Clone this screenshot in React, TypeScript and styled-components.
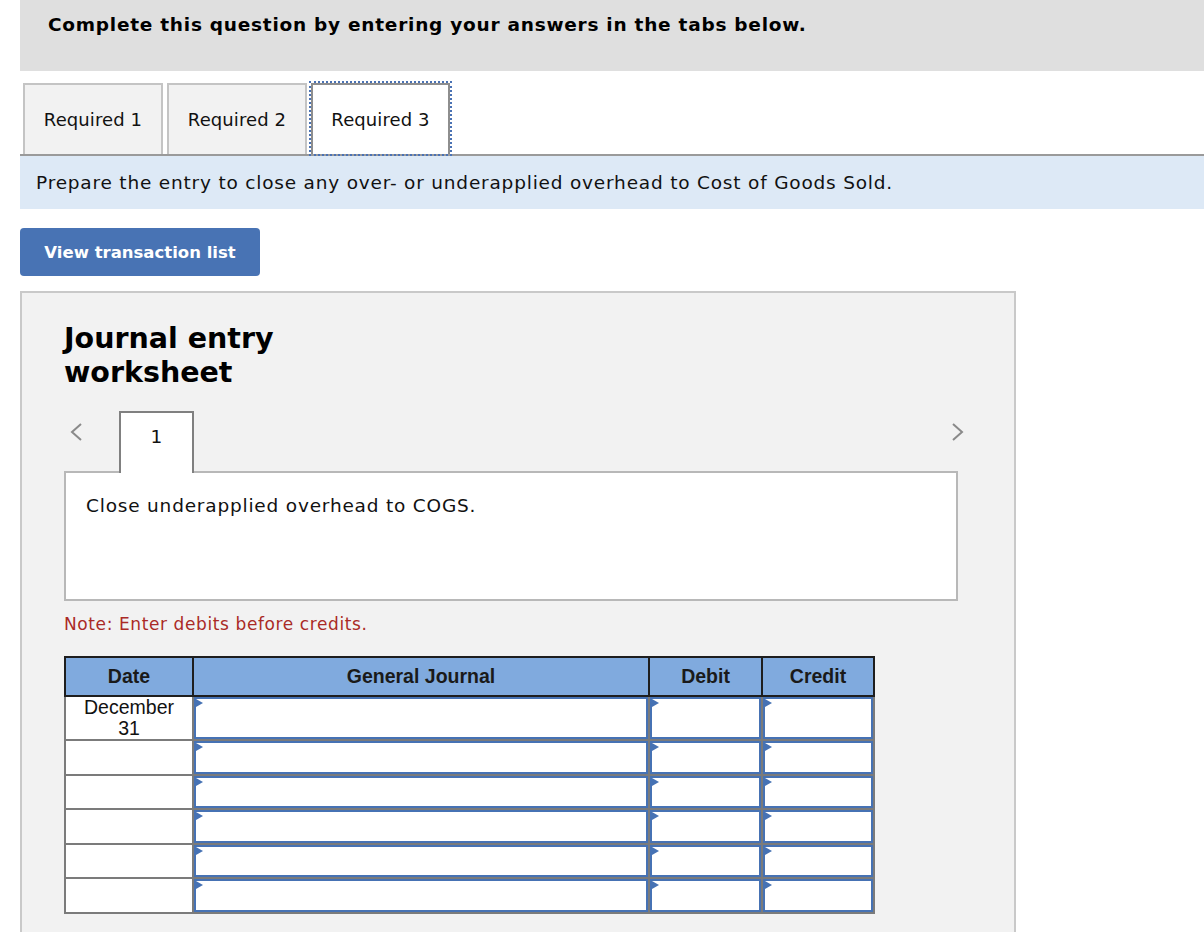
import React from 'react';
import styled, { createGlobalStyle } from 'styled-components';

const GlobalStyle = createGlobalStyle`
  body {
    margin: 0;
    background: #ffffff;
    font-family: 'DejaVu Sans', Verdana, sans-serif;
    color: #111;
  }
`;

const FONT = `'DejaVu Sans', Verdana, sans-serif`;
const TABLE_FONT = `'Liberation Sans', Arial, sans-serif`;

const App = () => {
  const rows = [0, 1, 2, 3, 4, 5];

  return (
    <>
      <GlobalStyle />
      <SCpage>
        <SCheader>Complete this question by entering your answers in the tabs below.</SCheader>

        <SCtabs>
          <SCtab>Required 1</SCtab>
          <SCtab>Required 2</SCtab>
          <SCtab active>Required 3</SCtab>
        </SCtabs>

        <SCprompt>Prepare the entry to close any over- or underapplied overhead to Cost of Goods Sold.</SCprompt>

        <SCbutton>View transaction list</SCbutton>

        <SCpanel>
          <SCtitle>
            Journal entry
            <br />
            worksheet
          </SCtitle>

          <SCnavRow>
            <SCprev>
              <svg width="16" height="22" viewBox="0 0 16 22">
                <polyline points="13,3 4,11 13,19" fill="none" stroke="#8a8a8a" strokeWidth="2" />
              </svg>
            </SCprev>
            <SCstepTab>1</SCstepTab>
            <SCspacer />
            <SCnext>
              <svg width="16" height="22" viewBox="0 0 16 22">
                <polyline points="3,3 12,11 3,19" fill="none" stroke="#8a8a8a" strokeWidth="2" />
              </svg>
            </SCnext>
          </SCnavRow>

          <SCdescBox>Close underapplied overhead to COGS.</SCdescBox>

          <SCnote>Note: Enter debits before credits.</SCnote>

          <SCtable>
            <colgroup>
              <col style={{ width: 128 }} />
              <col style={{ width: 456 }} />
              <col style={{ width: 113 }} />
              <col style={{ width: 112 }} />
            </colgroup>
            <thead>
              <tr>
                <SCth>Date</SCth>
                <SCth>General Journal</SCth>
                <SCth>Debit</SCth>
                <SCth>Credit</SCth>
              </tr>
            </thead>
            <tbody>
              {rows.map((r) => (
                <SCrow key={r} first={r === 0}>
                  <SCdateCell>
                    {r === 0 ? (
                      <>
                        December
                        <br />
                        31
                      </>
                    ) : null}
                  </SCdateCell>
                  <SCinputCell>
                    <SCfield />
                  </SCinputCell>
                  <SCinputCell>
                    <SCfield />
                  </SCinputCell>
                  <SCinputCell>
                    <SCfield />
                  </SCinputCell>
                </SCrow>
              ))}
            </tbody>
          </SCtable>
        </SCpanel>
      </SCpage>
    </>
  );
};

const SCpage = styled.div`
  margin-left: 20px;
  display: flex;
  flex-direction: column;
  align-items: flex-start;
`;

const SCheader = styled.div`
  align-self: stretch;
  height: 71px;
  box-sizing: border-box;
  padding: 14px 0 0 28px;
  background: #dfdfdf;
  font-family: ${FONT};
  font-weight: bold;
  font-size: 18.5px;
  letter-spacing: 0.75px;
  color: #000;
`;

const SCtabs = styled.div`
  align-self: stretch;
  display: flex;
  gap: 4px;
  margin-top: 12px;
  padding-left: 3px;
  border-bottom: 2px solid #9a9a9a;
`;

const SCtab = styled.div<{ active?: boolean }>`
  width: ${(p) => (p.active ? '139px' : '140px')};
  height: 71px;
  box-sizing: border-box;
  display: flex;
  align-items: center;
  justify-content: center;
  font-family: ${FONT};
  font-size: 18px;
  letter-spacing: 0.1px;
  color: #111;
  background: ${(p) => (p.active ? '#ffffff' : '#f2f2f2')};
  border: 2px solid ${(p) => (p.active ? '#8e8e8e' : '#c4c4c4')};
  border-bottom: none;
  outline: ${(p) => (p.active ? '2px dotted #4a72b4' : 'none')};
`;

const SCprompt = styled.div`
  align-self: stretch;
  height: 53px;
  box-sizing: border-box;
  display: flex;
  align-items: center;
  padding-left: 16px;
  background: #dde9f6;
  font-family: ${FONT};
  font-size: 18.5px;
  letter-spacing: 0.8px;
  color: #111;
`;

const SCbutton = styled.button`
  margin-top: 19px;
  width: 240px;
  height: 48px;
  border: none;
  border-radius: 4px;
  background: #4873b4;
  color: #fff;
  font-family: ${FONT};
  font-weight: bold;
  font-size: 16.5px;
  cursor: pointer;
`;

const SCpanel = styled.div`
  margin-top: 15px;
  width: 996px;
  box-sizing: border-box;
  background: #f2f2f2;
  border: 2px solid #c9c9c9;
  border-bottom: none;
  padding: 29px 56px 40px 42px;
  display: flex;
  flex-direction: column;
`;

const SCtitle = styled.div`
  font-family: ${FONT};
  font-weight: bold;
  font-size: 28.5px;
  line-height: 34px;
  color: #000;
`;

const SCnavRow = styled.div`
  margin-top: 21px;
  display: flex;
  align-items: flex-start;
  position: relative;
  z-index: 1;
  margin-bottom: -2px;
`;

const SCprev = styled.div`
  width: 16px;
  margin: 0 35px 0 4px;
  padding-top: 10px;
`;

const SCnext = styled.div`
  width: 16px;
  margin-right: -8px;
  padding-top: 10px;
`;

const SCstepTab = styled.div`
  width: 75px;
  height: 62px;
  box-sizing: border-box;
  background: #fff;
  border: 2px solid #808080;
  border-bottom: none;
  padding-top: 13px;
  text-align: center;
  font-family: ${FONT};
  font-size: 18.5px;
  color: #111;
`;

const SCspacer = styled.div`
  flex: 1;
`;

const SCdescBox = styled.div`
  height: 130px;
  box-sizing: border-box;
  background: #fff;
  border: 2px solid #b8b8b8;
  padding: 22px 20px;
  font-family: ${FONT};
  font-size: 18.5px;
  letter-spacing: 0.8px;
  color: #111;
`;

const SCnote = styled.div`
  margin-top: 13px;
  font-family: ${FONT};
  font-size: 17px;
  letter-spacing: 0.6px;
  color: #aa2a26;
`;

const SCtable = styled.table`
  margin-top: 22px;
  width: 809px;
  table-layout: fixed;
  border-collapse: collapse;
  font-family: ${TABLE_FONT};
  background: #fff;
  border: 2px solid #7b7b7b;
`;

const SCth = styled.th`
  height: 37px;
  padding: 0;
  background: #80aade;
  border: 2px solid #1e1e1e;
  font-size: 19.5px;
  font-weight: bold;
  color: #1a1a1a;
  text-align: center;
`;

const SCrow = styled.tr<{ first?: boolean }>`
  height: ${(p) => (p.first ? '42px' : '34.5px')};
`;

const SCdateCell = styled.td`
  padding: 0;
  border: 2px solid #7b7b7b;
  text-align: center;
  vertical-align: top;
  font-size: 19.5px;
  line-height: 21px;
  color: #111;
`;

const SCinputCell = styled.td`
  padding: 0;
  border: 2px solid #7b7b7b;
  position: relative;
`;

const SCfield = styled.div`
  position: absolute;
  inset: 0;
  border: 2px solid #4672b4;
  background: #fff;
  &::before {
    content: '';
    position: absolute;
    top: 0;
    left: 0;
    border-top: 4.5px solid transparent;
    border-bottom: 4.5px solid transparent;
    border-left: 7px solid #4672b4;
  }
`;

export default App;
